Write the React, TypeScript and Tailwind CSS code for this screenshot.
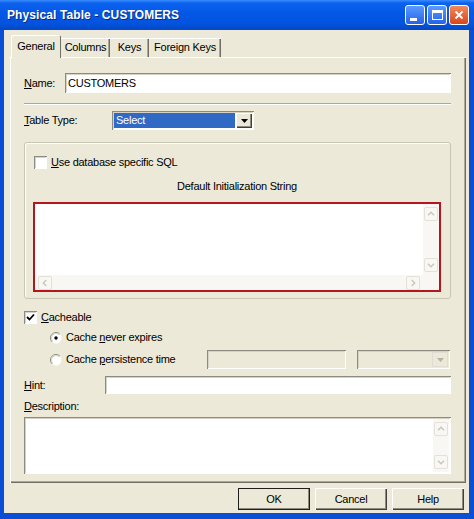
import type { ReactNode } from "react";

const sunken =
  "shadow-[inset_1px_1px_0_#8d8b80,inset_-1px_-1px_0_#ffffff,inset_2px_2px_0_#d6d3c6]";
const raised =
  "shadow-[inset_1px_1px_0_#ffffff,inset_-1px_-1px_0_#404040,inset_-2px_-2px_0_#8d8b80]";

const ARROWS = {
  up: "M3.5 8.5 L7 5 L10.5 8.5",
  down: "M3.5 5.5 L7 9 L10.5 5.5",
  left: "M8.5 3.5 L5 7 L8.5 10.5",
  right: "M5.5 3.5 L9 7 L5.5 10.5",
};

function ScrollBtn({ dir }: { dir: keyof typeof ARROWS }) {
  return (
    <div className="w-[14px] h-[14px] shrink-0 rounded-[2px] border border-[#e4e2d8] bg-[#f8f7f3] flex items-center justify-center">
      <svg width="14" height="14" viewBox="0 0 14 14">
        <path d={ARROWS[dir]} stroke="#c9c6b8" strokeWidth="1.6" fill="none" />
      </svg>
    </div>
  );
}

function VScroll() {
  return (
    <div className="w-[16px] flex flex-col justify-between items-center py-[3px] bg-[#f8f7f3]">
      <ScrollBtn dir="up" />
      <ScrollBtn dir="down" />
    </div>
  );
}

function Check({ checked }: { checked?: boolean }) {
  return (
    <span className={`w-[13px] h-[13px] shrink-0 bg-white ${sunken} flex items-center justify-center`}>
      {checked && (
        <svg width="9" height="9" viewBox="0 0 9 9">
          <path d="M1 4 L3.5 6.5 L8 1.5" stroke="#000" strokeWidth="1.8" fill="none" />
        </svg>
      )}
    </span>
  );
}

function Radio({ on }: { on?: boolean }) {
  return (
    <svg width="12" height="12" viewBox="0 0 12 12" className="shrink-0">
      <circle cx="6" cy="6" r="5.5" fill="#fff" />
      <path d="M2.1 9.9 A5.5 5.5 0 0 1 9.9 2.1" stroke="#8d8b80" fill="none" />
      <path d="M2.8 9.2 A4.5 4.5 0 0 1 9.2 2.8" stroke="#d6d3c6" fill="none" />
      {on && <circle cx="6" cy="6" r="1.7" fill="#000" />}
    </svg>
  );
}

function Mnemonic({ k, rest }: { k: string; rest: string }) {
  return (
    <span>
      <span className="underline underline-offset-[1px]">{k}</span>
      {rest}
    </span>
  );
}

function DropArrow({ disabled }: { disabled?: boolean }) {
  return (
    <div
      className={`w-[16px] h-[15px] shrink-0 bg-[#ece9d8] flex items-center justify-center ${
        disabled ? "border border-[#e0ded4]" : raised
      }`}
    >
      <svg width="7" height="4" viewBox="0 0 7 4">
        <path d="M0 0 H7 L3.5 4 Z" fill={disabled ? "#b5b2a6" : "#000"} />
      </svg>
    </div>
  );
}

function Button({ children, isDefault }: { children: ReactNode; isDefault?: boolean }) {
  return (
    <div
      className={`w-[72px] h-[22px] flex items-center justify-center bg-[#ece9d8] ${raised} ${
        isDefault ? "outline outline-1 outline-[#1f1f1f] -outline-offset-1" : ""
      }`}
    >
      {children}
    </div>
  );
}

function TitleBar() {
  return (
    <div className="h-[30px] shrink-0 flex items-center pl-[7px] pr-[5px] bg-[linear-gradient(to_bottom,#3b8cff_0%,#0b62ee_10%,#0457e6_45%,#0353de_80%,#0447c4_100%)]">
      <span className="flex-1 text-white font-bold text-[12px] tracking-[0.1px] [text-shadow:1px_1px_0_#0a2a80]">
        Physical Table - CUSTOMERS
      </span>
      <div className="flex gap-[2px]">
        <div className="w-[20px] h-[20px] rounded-[3px] border border-white bg-[linear-gradient(to_bottom,#5b9bff,#2563e8)] flex items-end pl-[4px] pb-[3px]">
          <div className="w-[7px] h-[3px] bg-white" />
        </div>
        <div className="w-[20px] h-[20px] rounded-[3px] border border-white bg-[linear-gradient(to_bottom,#5b9bff,#2563e8)] flex items-center justify-center">
          <div className="w-[11px] h-[10px] border border-white border-t-[3px]" />
        </div>
        <div className="w-[20px] h-[20px] rounded-[3px] border border-white bg-[linear-gradient(to_bottom,#f08a5c,#d9461c)] flex items-center justify-center">
          <svg width="10" height="10" viewBox="0 0 10 10">
            <path d="M1.5 1.5 L8.5 8.5 M8.5 1.5 L1.5 8.5" stroke="#fff" strokeWidth="1.8" />
          </svg>
        </div>
      </div>
    </div>
  );
}

function Tabs() {
  return (
    <div className="h-[22px] mt-[5px] flex items-end pl-[7px]">
      <div className="relative z-10 -mb-px h-[23px] w-[50px] bg-[#ece9d8] rounded-t-[2px] shadow-[inset_1px_1px_0_#ffffff,inset_-1px_0_0_#716f64] flex items-center justify-center">
        General
      </div>
      {[
        ["Columns", "w-[49px]"],
        ["Keys", "w-[39px]"],
        ["Foreign Keys", "w-[72px]"],
      ].map(([label, w]) => (
        <div
          key={label}
          className={`h-[19px] ${w} flex items-center justify-center shadow-[inset_0_1px_0_#ffffff,inset_-1px_0_0_#716f64,inset_-2px_0_0_#aca899]`}
        >
          {label}
        </div>
      ))}
    </div>
  );
}

export default function App() {
  return (
    <div className="w-[474px] h-[519px] flex flex-col overflow-hidden bg-[#0a4ed6] text-black text-[11px] tracking-[-0.25px] font-['Liberation_Sans',Arial,sans-serif]">
      <TitleBar />
      <div className="ml-[4px] w-[465px] h-[483px] bg-[#ece9d8] flex flex-col">
        <Tabs />

        {/* tab panel */}
        <div className="ml-[6px] w-[456px] h-[426px] pl-[14px] pr-[15px] pt-[16px] flex flex-col shadow-[inset_1px_1px_0_#ffffff,inset_-1px_-1px_0_#716f64,inset_-2px_-2px_0_#aca899]">
          <div className="h-[20px] flex items-center">
            <span className="w-[41px]">
              <Mnemonic k="N" rest="ame:" />
            </span>
            <div className={`flex-1 h-full bg-white ${sunken} flex items-center pl-[3px]`}>CUSTOMERS</div>
          </div>

          <div className="mt-[10px] h-[2px] border-t border-[#aca899] border-b border-b-white" />

          <div className="mt-[6px] h-[19px] flex items-center">
            <span className="w-[88px]">
              <Mnemonic k="T" rest="able Type:" />
            </span>
            <div className={`w-[142px] h-full bg-white ${sunken} flex items-center p-[2px] gap-[1px]`}>
              <div className="flex-1 h-full bg-[#316ac5] text-white flex items-center pl-[2px]">Select</div>
              <DropArrow />
            </div>
          </div>

          {/* group box */}
          <div className="mt-[12px] h-[157px] rounded-[3px] border border-[#c9c6b6] shadow-[inset_1px_1px_0_#ffffff] pl-[8px] pt-[13px] flex flex-col">
            <div className="h-[13px] flex items-center gap-[4px] ml-[1px]">
              <Check />
              <Mnemonic k="U" rest="se database specific SQL" />
            </div>
            <div className="mt-[11px] h-[12px] w-[408px] flex items-center justify-center">
              Default Initialization String
            </div>
            <div className="mt-[10px] w-[408px] h-[90px] border-2 border-[#b3161d] bg-white flex flex-col">
              <div className="flex-1 flex">
                <div className="flex-1" />
                <VScroll />
              </div>
              <div className="h-[15px] flex">
                <div className="flex-1 flex justify-between items-center px-[3px] bg-[#f8f7f3]">
                  <ScrollBtn dir="left" />
                  <ScrollBtn dir="right" />
                </div>
                <div className="w-[16px] bg-[#f8f7f3]" />
              </div>
            </div>
          </div>

          <div className="mt-[12px] h-[13px] flex items-center gap-[4px]">
            <Check checked />
            <Mnemonic k="C" rest="acheable" />
          </div>

          <div className="mt-[7px] h-[13px] flex items-center gap-[4px] pl-[26px]">
            <Radio on />
            <span>
              Cache <Mnemonic k="n" rest="ever expires" />
            </span>
          </div>

          <div className="mt-[6px] h-[19px] flex items-center pl-[26px]">
            <div className="w-[157px] flex items-center gap-[4px]">
              <Radio />
              <span>
                Cache <Mnemonic k="p" rest="ersistence time" />
              </span>
            </div>
            <div className={`w-[139px] h-full bg-[#ece9d8] ${sunken}`} />
            <div className={`ml-[11px] w-[93px] h-full bg-[#ece9d8] ${sunken} flex items-center justify-end pr-[2px]`}>
              <DropArrow disabled />
            </div>
          </div>

          <div className="mt-[7px] h-[18px] flex items-center">
            <span className="w-[81px]">
              <Mnemonic k="H" rest="int:" />
            </span>
            <div className={`flex-1 h-full bg-white ${sunken}`} />
          </div>

          <div className="mt-[6px] h-[12px] flex items-center">
            <Mnemonic k="D" rest="escription:" />
          </div>

          <div className={`mt-[5px] h-[57px] bg-white ${sunken} flex p-[2px]`}>
            <div className="flex-1" />
            <VScroll />
          </div>
        </div>

        <div className="mt-[5px] flex justify-end gap-[5px] pr-[5px]">
          <Button isDefault>OK</Button>
          <Button>Cancel</Button>
          <Button>Help</Button>
        </div>
      </div>
    </div>
  );
}
